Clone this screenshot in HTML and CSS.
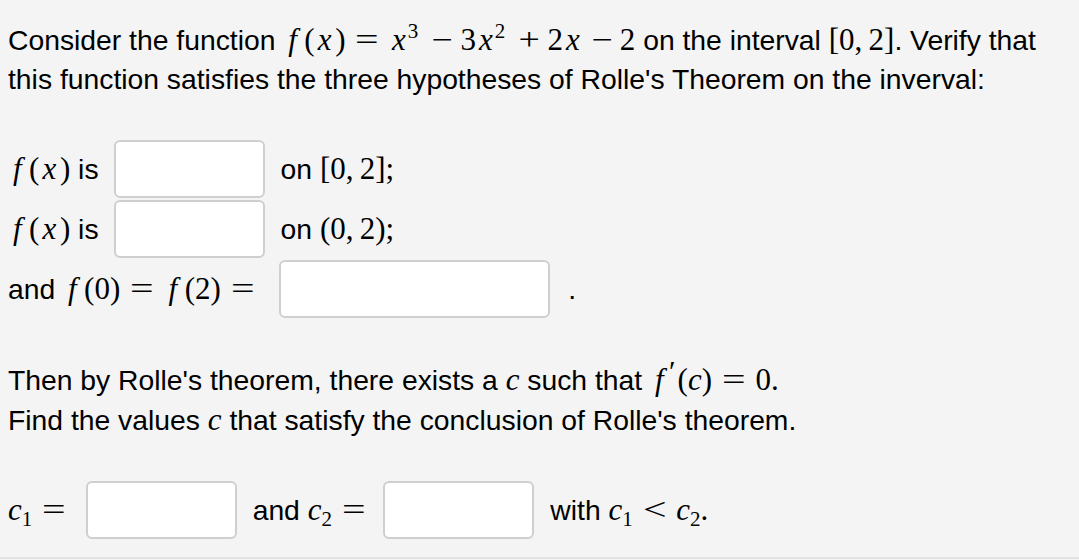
FILE: index.html
```html
<!DOCTYPE html>
<html>
<head>
<meta charset="utf-8">
<link rel="stylesheet" href="styles.css">
</head>
<body>
<div class="page">
  <p class="intro">Consider the function <span class="m"><i class="f">f</i>(<i class="x">x</i>)<span class="rel">=</span><i class="x">x</i><sup>3</sup><span class="bin">−</span>3<i class="x">x</i><sup>2</sup><span class="bin">+</span>2<i class="x">x</i><span class="bin">−</span>2</span> on the interval <span class="m">[0,&#8201;2]</span>. Verify that<br>this function satisfies the three hypotheses of Rolle's Theorem on the inverval:</p>

  <div class="rows">
    <div class="row">
      <span class="label"><span class="m"><i class="f">f</i>(<i class="x">x</i>)</span> is</span>
      <input class="box" type="text">
      <span class="after">on <span class="m">[0,&#8201;2];</span></span>
    </div>
    <div class="row">
      <span class="label"><span class="m"><i class="f">f</i>(<i class="x">x</i>)</span> is</span>
      <input class="box" type="text">
      <span class="after">on <span class="m">(0,&#8201;2);</span></span>
    </div>
    <div class="row">
      <span class="label">and <span class="m"><i class="f">f</i>(0)<span class="rel">=</span><i class="f">f</i>(2)<span class="rel">=</span></span></span>
      <input class="box wide" type="text">
      <span class="after dot">.</span>
    </div>
  </div>

  <p class="concl">Then by Rolle's theorem, there exists a <span class="m"><i>c</i></span> such that <span class="m"><i class="f">f</i><span class="prime">′</span>(<i>c</i>)<span class="rel">=</span>0.</span><br>Find the values <span class="m"><i>c</i></span> that satisfy the conclusion of Rolle's theorem.</p>

  <div class="row last">
    <span class="label"><span class="m"><i>c</i><sub>1</sub><span class="rel">=</span></span></span>
    <input class="box" type="text">
    <span class="after">and <span class="m"><i>c</i><sub>2</sub><span class="rel">=</span></span></span>
    <input class="box" type="text">
    <span class="after">with <span class="m"><i>c</i><sub>1</sub><span class="rel">&lt;</span><i>c</i><sub>2</sub>.</span></span>
  </div>
</div>
</body>
</html>
```
FILE: styles.css
```css
html, body {
  margin: 0;
  padding: 0;
  background: #f4f4f4;
}
.page {
  padding: 20px 8px 17px 8px;
  border-bottom: 2px solid #e2e2e2;
  font-family: "Liberation Sans", Arial, sans-serif;
  font-size: 28.3px;
  color: #000;
}
.intro, .concl {
  margin: 0;
  line-height: 39px;
  white-space: nowrap;
}
.m {
  font-family: "Liberation Serif", "Times New Roman", serif;
  font-size: 31px;
}
.m i {
  font-style: italic;
}
.m i.f {
  padding: 0 0.24em 0 0.16em;
}
.m i.x {
  padding: 0 0.12em 0 0.1em;
}
.m i.x + sup {
  margin-left: -0.08em;
}
.m sup + .bin {
  margin-left: 0.45em;
}
.rel, .bin {
  display: inline-block;
  text-align: center;
  line-height: 1;
}
.rel {
  width: 0.7em;
  margin: 0 0.35em;
  transform: scaleX(1.35);
}
.bin {
  width: 0.65em;
  margin: 0 0.26em;
  transform: scaleX(1.22);
}
.prime {
  font-size: 30px;
  vertical-align: 9px;
  line-height: 0;
  margin: 0 2px 0 -2px;
}
.m sup {
  font-size: 21px;
  vertical-align: 12px;
  line-height: 0;
}
.m sub {
  font-size: 21px;
  vertical-align: -6px;
  line-height: 0;
}
.rows {
  margin-top: 40px;
}
.row {
  display: flex;
  align-items: center;
  padding: 1px 0;
}
.label {
  white-space: nowrap;
}
.box {
  box-sizing: border-box;
  height: 58px;
  width: 151px;
  margin: 0 16px 0 15px;
  border: 2px solid #cfcfcf;
  border-radius: 6px;
  background: #fff;
  padding: 0 8px;
  font-size: 24px;
}
.box.wide {
  width: 271px;
}
.concl {
  margin-top: 41px;
}
.row.last {
  margin-top: 40px;
}
.row.last .box {
  margin: 0 16px 0 10px;
}
.row.last .after + .box {
  margin-left: 8px;
}
.dot {
  margin-left: 2px;
}
```
